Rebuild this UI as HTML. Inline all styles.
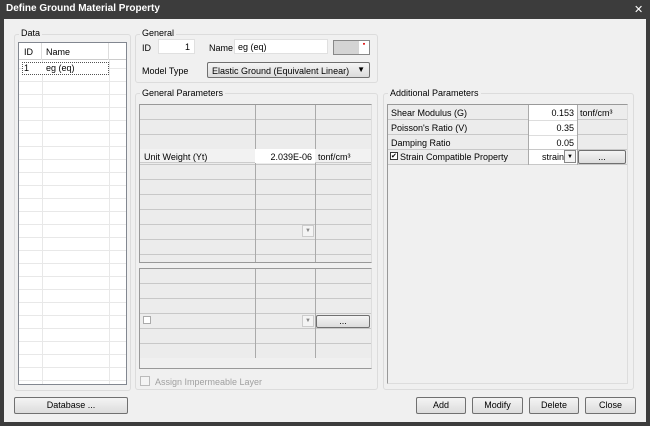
<!DOCTYPE html><html><head><style>
*{box-sizing:border-box;margin:0;padding:0}
body{width:650px;height:430px;background:#fff;font-family:"Liberation Sans",sans-serif;font-size:9px;color:#000;position:relative;overflow:hidden}
.a{position:absolute}
.win{left:0;top:0;width:650px;height:426px;background:#3c3c3c}
.title{left:6px;top:3px;color:#fff;font-weight:bold;font-size:10px}
.x{left:634px;top:3px;color:#fff;font-size:11px}
.body{left:4px;top:19px;width:642px;height:403px;background:#f0f0f0}
.grp{border:1px solid #dcdcdc;border-radius:3px}
.lbl{background:#f0f0f0;padding:0 2px}
.box{background:#fff;border:1px solid #a0a0a0}
.btn{border:1px solid #707070;border-radius:2px;background:linear-gradient(#f4f4f4,#dcdcdc);text-align:center;line-height:15px}
.cell{border-right:1px dotted #aaa;border-bottom:1px dotted #aaa;position:absolute}
</style></head><body>
<div class="a win"></div>
<div class="a title">Define Ground Material Property</div>
<div class="a x">✕</div>
<div class="a body"></div>

<div class="a grp" style="left:14px;top:34px;width:117px;height:357px"></div>
<div class="a lbl" style="left:19px;top:28px">Data</div>
<div class="a" style="left:18px;top:42px;width:109px;height:343px;background:#fff;border:1px solid #828790;
background-image:linear-gradient(90deg,transparent 23px,#e8e8e8 23px,#e8e8e8 24px,transparent 24px,transparent 90px,#e8e8e8 90px,#e8e8e8 91px,transparent 91px),repeating-linear-gradient(transparent 0 12px,#e8e8e8 12px 13px)"></div>
<div class="a" style="left:19px;top:43px;width:107px;height:17px;background:#fff;border-bottom:1px solid #ccc"></div>
<div class="a" style="left:24px;top:47px">ID</div><div class="a" style="left:46px;top:47px">Name</div>
<div class="a" style="left:41px;top:43px;width:1px;height:17px;background:#ddd"></div>
<div class="a" style="left:108px;top:43px;width:1px;height:17px;background:#ddd"></div>
<div class="a" style="left:22px;top:62px;width:87px;height:13px;border:1px dotted #555;background:#fff"></div>
<div class="a" style="left:24px;top:63px">1</div><div class="a" style="left:46px;top:63px">eg (eq)</div>

<div class="a grp" style="left:135px;top:34px;width:243px;height:49px"></div>
<div class="a lbl" style="left:140px;top:28px">General</div>
<div class="a" style="left:142px;top:43px">ID</div>
<div class="a box" style="left:158px;top:39px;width:37px;height:15px;border-color:#e0e0e0;text-align:right;padding:2px 4px">1</div>
<div class="a" style="left:209px;top:43px">Name</div>
<div class="a box" style="left:234px;top:39px;width:94px;height:15px;border-color:#e0e0e0;padding:2px 3px">eg (eq)</div>
<div class="a" style="left:333px;top:40px;width:37px;height:15px;background:#d4d4d4;border:1px solid #888"></div>
<div class="a" style="left:359px;top:41px;width:10px;height:13px;background:#fff;color:#d00;font-size:7px;text-align:center">▪</div>
<div class="a" style="left:142px;top:66px">Model Type</div>
<div class="a" style="left:207px;top:62px;width:163px;height:16px;border:1px solid #707070;border-radius:2px;background:linear-gradient(#f4f4f4,#dcdcdc);padding:3px 4px">Elastic Ground (Equivalent Linear)<span style="position:absolute;right:4px;top:2px;font-size:8px">▼</span></div>

<div class="a grp" style="left:135px;top:93px;width:243px;height:297px"></div>
<div class="a lbl" style="left:140px;top:88px">General Parameters</div>
<div class="a" style="left:139px;top:104px;width:233px;height:159px;border:1px solid #999;border-right:1px solid #ddd;background:#ececec;
background-image:linear-gradient(90deg,transparent 115px,#aaa 115px,#aaa 116px,transparent 116px,transparent 175px,#aaa 175px,#aaa 176px,transparent 176px),repeating-linear-gradient(transparent 0 14px,#c8c8c8 14px 15px)"></div>
<div class="a" style="left:140px;top:149px;width:231px;height:14px;background:#f2f2f2;border-bottom:1px solid #ccc"></div>
<div class="a" style="left:255px;top:149px;width:60px;height:14px;background:#fff"></div>
<div class="a" style="left:144px;top:152px">Unit Weight (Yt)</div>
<div class="a" style="left:255px;top:152px;width:57px;text-align:right">2.039E-06</div>
<div class="a" style="left:318px;top:152px">tonf/cm³</div>
<div class="a" style="left:302px;top:225px;width:12px;height:12px;border:1px solid #ccc;background:#f4f4f4;font-size:6px;color:#888;text-align:center;line-height:11px">▼</div>

<div class="a" style="left:139px;top:268px;width:233px;height:101px;border:1px solid #999;border-right:1px solid #ddd;background:#ececec;
background-image:linear-gradient(90deg,transparent 115px,#aaa 115px,#aaa 116px,transparent 116px,transparent 175px,#aaa 175px,#aaa 176px,transparent 176px),repeating-linear-gradient(transparent 0 14px,#c8c8c8 14px 15px)"></div>
<div class="a" style="left:140px;top:358px;width:231px;height:10px;background:#f0f0f0"></div>
<div class="a" style="left:143px;top:316px;width:8px;height:8px;border:1px solid #aaa;background:#fff"></div>
<div class="a" style="left:302px;top:315px;width:12px;height:12px;border:1px solid #ccc;background:#f4f4f4;font-size:6px;color:#888;text-align:center;line-height:11px">▼</div>
<div class="a btn" style="left:316px;top:315px;width:54px;height:13px;line-height:11px">...</div>
<div class="a" style="left:140px;top:376px;width:10px;height:10px;border:1px solid #bbb;background:#f4f4f4"></div>
<div class="a" style="left:155px;top:377px;color:#a0a0a0">Assign Impermeable Layer</div>

<div class="a grp" style="left:383px;top:93px;width:251px;height:297px"></div>
<div class="a lbl" style="left:388px;top:88px">Additional Parameters</div>
<div class="a" style="left:387px;top:104px;width:241px;height:280px;border:1px solid #999;border-right:1px solid #ddd;border-bottom:1px solid #ddd;background:#f0f0f0"></div>
<div class="a" style="left:388px;top:105px;width:239px;height:60px;background:#ececec;
background-image:linear-gradient(90deg,transparent 140px,#aaa 140px,#aaa 141px,transparent 141px,transparent 189px,#aaa 189px,#aaa 190px,transparent 190px),repeating-linear-gradient(transparent 0 14px,#c8c8c8 14px 15px)"></div>
<div class="a" style="left:529px;top:105px;width:48px;height:44px;background:#fff"></div>
<div class="a" style="left:529px;top:120px;width:48px;height:1px;background:#ddd"></div>
<div class="a" style="left:529px;top:135px;width:48px;height:1px;background:#ddd"></div>
<div class="a" style="left:391px;top:108px">Shear Modulus (G)</div><div class="a" style="left:529px;top:108px;width:45px;text-align:right">0.153</div><div class="a" style="left:580px;top:108px">tonf/cm³</div>
<div class="a" style="left:391px;top:123px">Poisson's Ratio (V)</div><div class="a" style="left:529px;top:123px;width:45px;text-align:right">0.35</div>
<div class="a" style="left:391px;top:138px">Damping Ratio</div><div class="a" style="left:529px;top:138px;width:45px;text-align:right">0.05</div>
<div class="a" style="left:390px;top:152px;width:8px;height:8px;border:1px solid #333;background:#fff;font-size:7px;line-height:7px">✔</div>
<div class="a" style="left:400px;top:152px">Strain Compatible Property</div>
<div class="a" style="left:529px;top:150px;width:48px;height:14px;background:#fff"></div>
<div class="a" style="left:512px;top:152px;width:52px;text-align:right">strain</div>
<div class="a" style="left:564px;top:150px;width:12px;height:13px;border:1px solid #888;background:#f4f4f4;font-size:6px;text-align:center;line-height:12px">▼</div>
<div class="a btn" style="left:578px;top:150px;width:48px;height:14px;line-height:12px">...</div>

<div class="a btn" style="left:14px;top:397px;width:114px;height:17px">Database ...</div>
<div class="a btn" style="left:416px;top:397px;width:50px;height:17px">Add</div>
<div class="a btn" style="left:472px;top:397px;width:51px;height:17px">Modify</div>
<div class="a btn" style="left:529px;top:397px;width:50px;height:17px">Delete</div>
<div class="a btn" style="left:585px;top:397px;width:51px;height:17px">Close</div>
</body></html>
